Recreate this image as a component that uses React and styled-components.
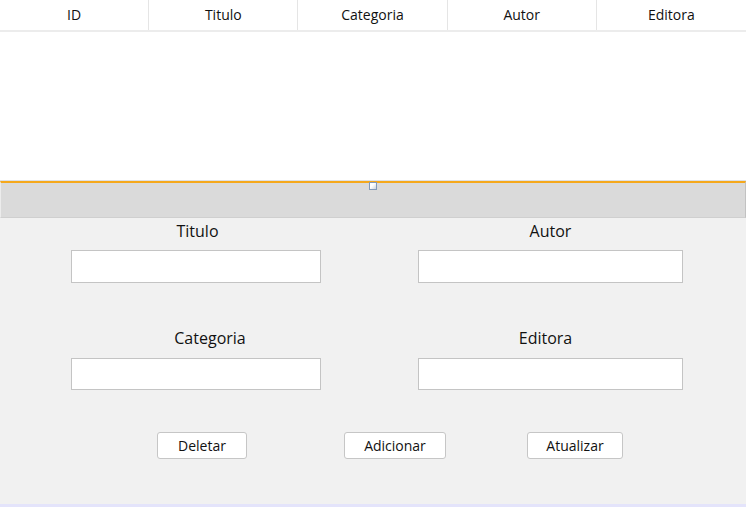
import React from 'react';
import styled, { createGlobalStyle } from 'styled-components';

const GlobalStyle = createGlobalStyle`
  html, body {
    margin: 0;
    padding: 0;
    background: #ffffff;
    font-family: "Open Sans", "Liberation Sans", sans-serif;
  }
`;

const Window = styled.div`
  width: 746px;
  height: 507px;
  display: flex;
  flex-direction: column;
  overflow: hidden;
`;

const TableArea = styled.div`
  height: 181px;
  background: #ffffff;
  border-bottom: 1px solid #dde1e7;
  box-sizing: border-box;
`;

const HeaderRow = styled.div`
  display: grid;
  grid-template-columns: repeat(5, 1fr);
  height: 32px;
  border-bottom: 2px solid #ececec;
  box-sizing: border-box;
`;

const HeaderCell = styled.div`
  display: flex;
  align-items: center;
  justify-content: center;
  font-size: 14px;
  color: #111;
  border-right: ${p => (p.$last ? 'none' : '1px solid #e5e5e5')};
  padding-bottom: 1px;
`;

const Splitter = styled.div`
  position: relative;
  height: 37px;
  background: #dadada;
  border-top: 2px solid #f5a81c;
  border-right: 1px solid #c2c2c2;
  border-left: 1px solid #ececec;
  border-bottom: 1px solid #cfcfcf;
  box-sizing: border-box;
`;

const Grip = styled.div`
  position: absolute;
  left: 368px;
  top: -1px;
  width: 6px;
  height: 6px;
  border: 1px solid #8299b8;
  background: linear-gradient(135deg, #ffffff 40%, #c9d3e0);
`;

const FormArea = styled.div`
  flex: 1;
  background: #f1f1f1;
  border-bottom: 3px solid #e4e4fb;
  padding: 2px 0 0 71px;
  box-sizing: border-box;
`;

const FieldGrid = styled.div`
  display: grid;
  grid-template-columns: 250px 265px;
  column-gap: 97px;
  row-gap: 44px;
`;

const Field = styled.div`
  display: flex;
  flex-direction: column;
  align-items: center;
`;

const Label = styled.label`
  font-size: 16px;
  line-height: 22px;
  color: #111;
  margin-bottom: ${p => p.$below || 8}px;
  margin-left: ${p => p.$shift || 0}px;
`;

const Input = styled.input`
  width: 100%;
  height: ${p => p.$h || 33}px;
  box-sizing: border-box;
  border: 1px solid #c4c4c4;
  background: #ffffff;
  outline: none;
`;

const ButtonRow = styled.div`
  display: flex;
  margin-top: 42px;
  padding-left: 86px;
`;

const Button = styled.button`
  width: ${p => p.$w}px;
  height: 27px;
  margin-left: ${p => p.$gap || 0}px;
  background: #ffffff;
  border: 1px solid #c6c6c6;
  border-radius: 3px;
  font-family: "Open Sans", "Liberation Sans", sans-serif;
  font-size: 14px;
  color: #111;
  padding: 0 0 1px;
`;

const columns = ['ID', 'Titulo', 'Categoria', 'Autor', 'Editora'];

export default function App() {
  return (
    <>
      <GlobalStyle />
      <Window>
        <TableArea>
          <HeaderRow>
            {columns.map((c, i) => (
              <HeaderCell key={c} $last={i === columns.length - 1}>{c}</HeaderCell>
            ))}
          </HeaderRow>
        </TableArea>

        <Splitter>
          <Grip />
        </Splitter>

        <FormArea>
          <FieldGrid>
            <Field>
              <Label $shift={3}>Titulo</Label>
              <Input />
            </Field>
            <Field>
              <Label>Autor</Label>
              <Input />
            </Field>
            <Field>
              <Label $shift={28} $below={9}>Categoria</Label>
              <Input $h={32} />
            </Field>
            <Field>
              <Label $shift={-10} $below={9}>Editora</Label>
              <Input $h={32} />
            </Field>
          </FieldGrid>

          <ButtonRow>
            <Button $w={90}>Deletar</Button>
            <Button $w={102} $gap={97}>Adicionar</Button>
            <Button $w={96} $gap={81}>Atualizar</Button>
          </ButtonRow>
        </FormArea>
      </Window>
    </>
  );
}
